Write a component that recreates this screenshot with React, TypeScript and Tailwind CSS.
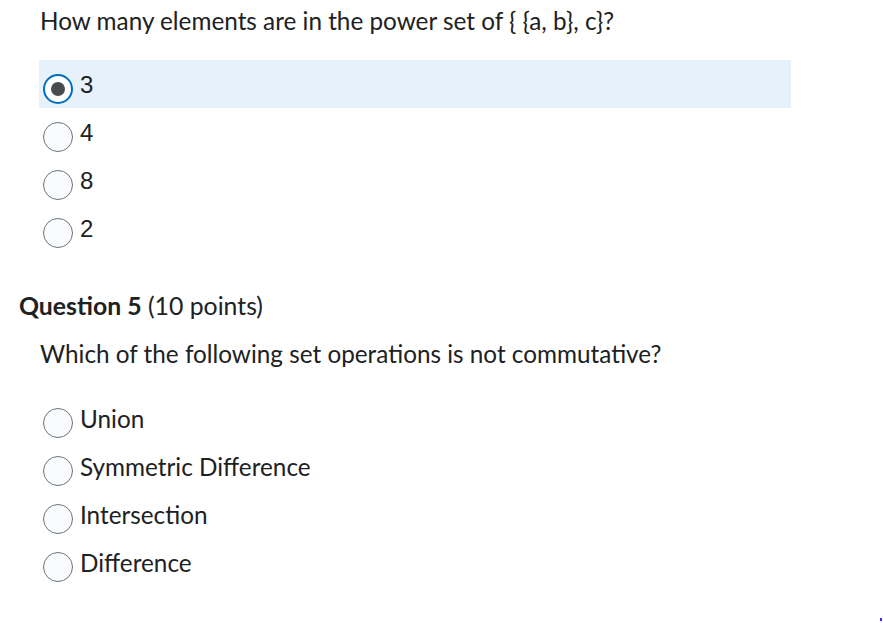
import React from 'react';

interface Option {
  label: string;
  selected?: boolean;
}

const q4: Option[] = [{ label: '3', selected: true }, { label: '4' }, { label: '8' }, { label: '2' }];
const q5: Option[] = [
  { label: 'Union' },
  { label: 'Symmetric Difference' },
  { label: 'Intersection' },
  { label: 'Difference' },
];

function Radio({ selected }: { selected?: boolean }) {
  if (selected) {
    return (
      <span className="w-[30px] h-[30px] rounded-full border-2 border-[#006fbf] bg-white flex items-center justify-center shrink-0">
        <span className="w-[14px] h-[14px] rounded-full bg-[#494c4e]" />
      </span>
    );
  }
  return <span className="w-[30px] h-[30px] rounded-full border border-[#6e7376] bg-[#f9fbff] shrink-0" />;
}

function OptionRow({ opt, numeric }: { opt: Option; numeric?: boolean }) {
  return (
    <div
      className={`h-[48px] flex items-start gap-[7px] pl-[4px] pt-[14px] ${opt.selected ? 'bg-[#e6f1fb]' : ''}`}
    >
      <Radio selected={opt.selected} />
      <span
        className={
          numeric
            ? "font-['Liberation_Sans',Arial,sans-serif] text-[24px] leading-[28px] text-[#202122] -mt-[3px]"
            : "font-['Lato',sans-serif] text-[24.3px] leading-[28px] text-[#202122] -mt-[3px]"
        }
      >
        {opt.label}
      </span>
    </div>
  );
}

export default function App() {
  return (
    <div className="relative w-[883px] h-[623px] bg-white font-['Lato',sans-serif] text-[#202122] overflow-hidden">
      <p className="pl-[40px] pt-[5px] text-[24.3px] leading-[32px]">How many elements are in the power set of {'{ {a, b}, c}'}?</p>

      <div className="mt-[23px] ml-[39px] w-[752px]">
        {q4.map((o) => (
          <OptionRow key={o.label} opt={o} numeric />
        ))}
      </div>

      <h2 className="pl-[19px] mt-[38px] text-[24.8px] leading-[32px]">
        <span className="font-bold">Question 5</span> (10 points)
      </h2>

      <p className="pl-[40px] mt-[16px] text-[24.3px] leading-[32px]">Which of the following set operations is not commutative?</p>

      <div className="mt-[24px] ml-[39px] w-[752px]">
        {q5.map((o) => (
          <OptionRow key={o.label} opt={o} />
        ))}
      </div>

      <span className="absolute right-[1px] bottom-[2px] w-[2px] h-[3px] bg-[#2b2bff]" />
    </div>
  );
}
